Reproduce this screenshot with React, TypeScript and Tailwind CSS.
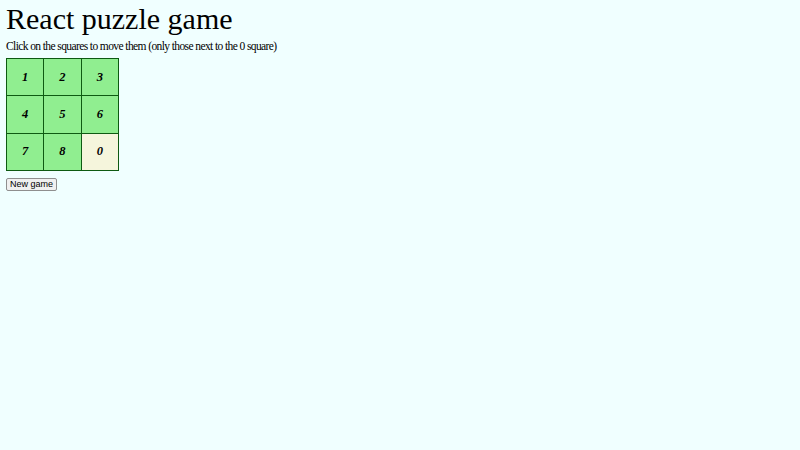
import React, { useState } from "react";

const SOLVED = [1, 2, 3, 4, 5, 6, 7, 8, 0];

const shuffle = () => {
  const arr = [...SOLVED];
  for (let i = arr.length - 1; i > 0; i--) {
    const j = Math.floor(Math.random() * (i + 1));
    [arr[i], arr[j]] = [arr[j], arr[i]];
  }
  return arr;
};

export default function App() {
  const [tiles, setTiles] = useState<number[]>(SOLVED);

  const move = (idx: number) => {
    const zero = tiles.indexOf(0);
    const r1 = Math.floor(idx / 3), c1 = idx % 3;
    const r2 = Math.floor(zero / 3), c2 = zero % 3;
    if (Math.abs(r1 - r2) + Math.abs(c1 - c2) !== 1) return;
    const next = [...tiles];
    [next[idx], next[zero]] = [next[zero], next[idx]];
    setTiles(next);
  };

  return (
    <div className="min-h-screen bg-[#f0ffff] px-[6px] pt-[2px] font-['Liberation_Serif',serif] text-black">
      <h1 className="text-[30px] leading-[34px]">React puzzle game</h1>
      <p className="text-[11.5px] leading-[14px] tracking-[-0.6px] mt-[3px]">
        Click on the squares to move them (only those next to the 0 square)
      </p>
      <div className="mt-[5px] grid grid-cols-[repeat(3,36.33px)] gap-px p-px w-fit bg-[#0e5a12]">
        {tiles.map((n, i) => (
          <div
            key={i}
            onClick={() => move(i)}
            className={`h-[36.33px] flex items-center justify-center cursor-pointer font-bold italic text-[12.5px] ${
              n === 0 ? "bg-[#f5f5dc]" : "bg-[#90ee90]"
            }`}
          >
            {n}
          </div>
        ))}
      </div>
      <button
        onClick={() => setTiles(shuffle())}
        className="mt-[7px] block h-[13px] px-[3px] text-[9px] leading-[10px] font-['Liberation_Sans',sans-serif] bg-[#f0f0f0] border border-[#8f8f8f] rounded-[2px]"
      >
        New game
      </button>
    </div>
  );
}
